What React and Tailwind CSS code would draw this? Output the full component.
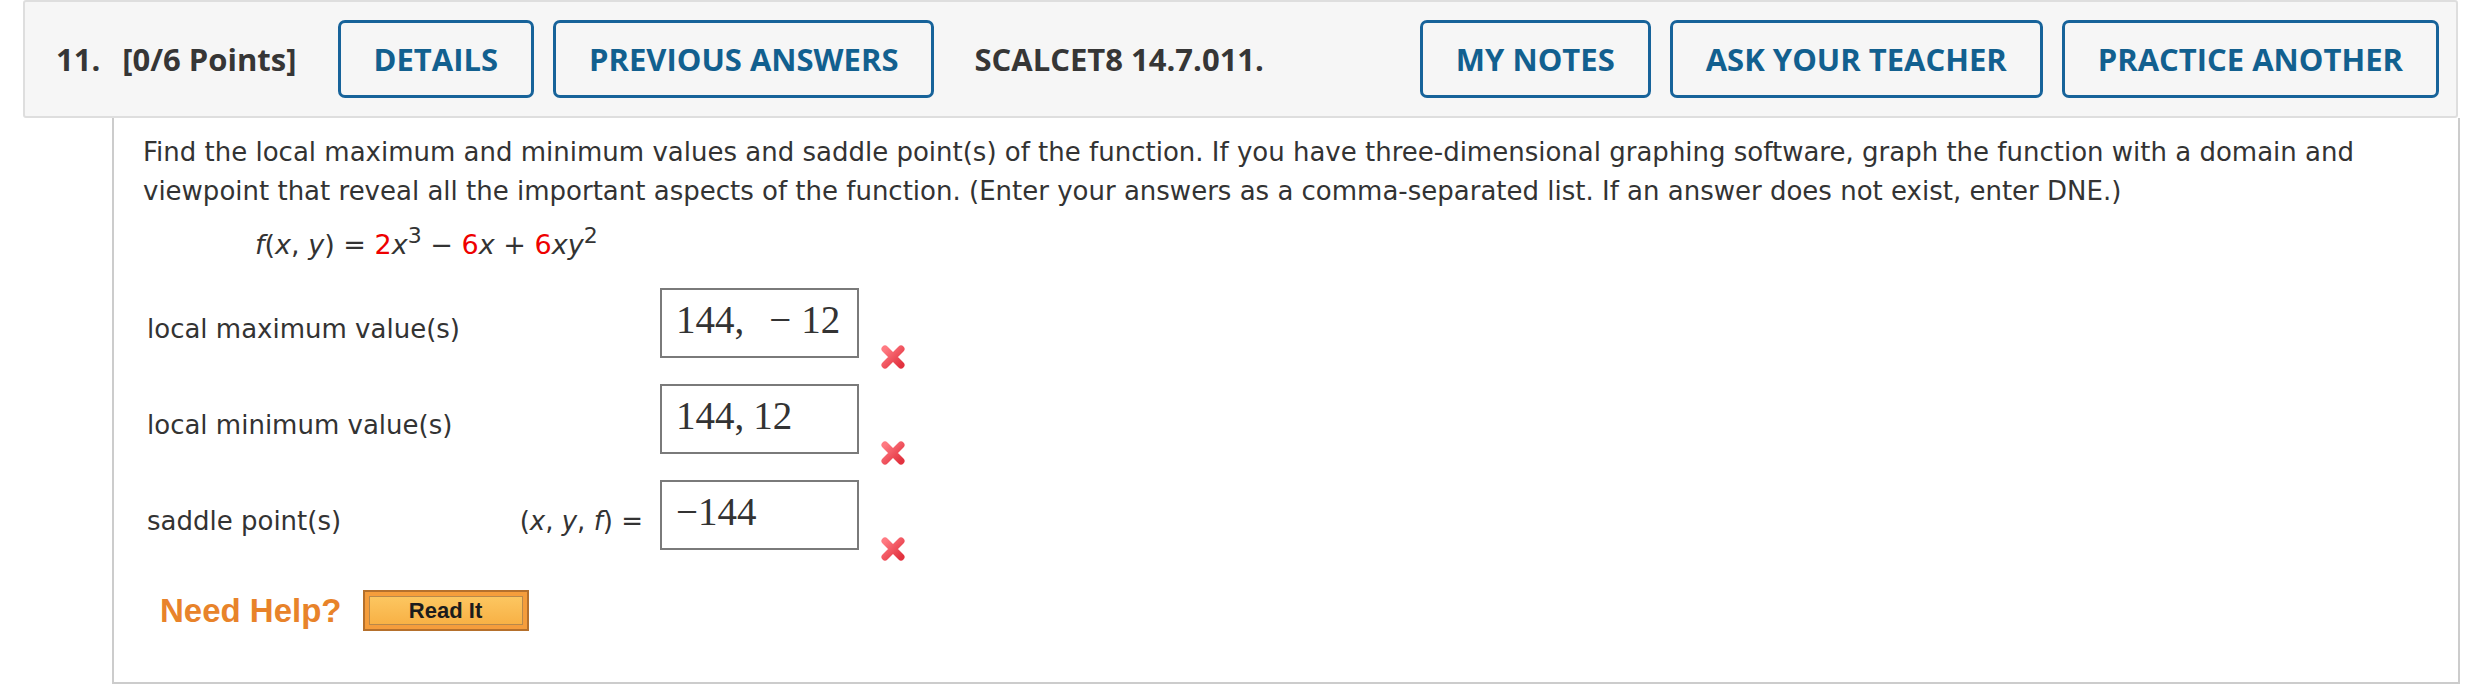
import React from "react";

const headerButtons = ["MY NOTES", "ASK YOUR TEACHER", "PRACTICE ANOTHER"];

function HeaderButton({ children }) {
  return (
    <button className="h-[78px] px-[33px] border-[3px] border-[#17639a] rounded-[7px] text-[#12608f] text-[31px] font-bold bg-transparent">
      {children}
    </button>
  );
}

function WrongMark() {
  return (
    <svg width="26" height="26" viewBox="0 0 26 26" className="mt-[56px] ml-[21px] shrink-0">
      <defs>
        <linearGradient id="xg" x1="0" y1="0" x2="1" y2="1">
          <stop offset="0" stopColor="#ff7a82" />
          <stop offset="1" stopColor="#e2323f" />
        </linearGradient>
      </defs>
      <path d="M5 5 L21 21 M21 5 L5 21" stroke="url(#xg)" strokeWidth="7" strokeLinecap="round" />
    </svg>
  );
}

function AnswerRow({ label, prefix, children }) {
  return (
    <div className="flex items-start h-[96px]">
      <div className="w-[517px] pl-[4px] pr-[17px] pt-[22px] flex justify-between leading-[39px]">
        <span>{label}</span>
        {prefix}
      </div>
      <div className="w-[199px] h-[70px] border-2 border-[#7a7a7a] pl-[14px] pt-[8px] font-['Liberation_Serif',serif] text-[39px] leading-[44px] text-[#333] flex">
        {children}
      </div>
      <WrongMark />
    </div>
  );
}

export default function App() {
  return (
    <div className="w-[2468px] h-[698px] bg-white font-['DejaVu_Sans',sans-serif] text-[#333]">
      <div className="pl-[23px] pr-[10px]">
        <div className="h-[118px] border-2 border-[#dedede] rounded-[3px] bg-[#f6f6f6] flex items-center pl-[31px] pr-[17px] font-['Open_Sans',sans-serif]">
          <span className="text-[31px] font-bold text-[#363636] mr-[22px]">11.</span>
          <span className="text-[31px] font-bold text-[#363636] mr-[41px]">[0/6 Points]</span>
          <div className="flex gap-[19px]">
            <HeaderButton>DETAILS</HeaderButton>
            <HeaderButton>PREVIOUS ANSWERS</HeaderButton>
          </div>
          <span className="ml-[40px] text-[31px] font-bold text-[#363636]">SCALCET8 14.7.011.</span>
          <div className="ml-auto flex gap-[19px]">
            {headerButtons.map((b) => (
              <HeaderButton key={b}>{b}</HeaderButton>
            ))}
          </div>
        </div>
      </div>

      <div className="ml-[112px] w-[2348px] h-[566px] border-x-2 border-b-2 border-[#cccccc] pl-[29px] pr-[36px] pt-[15px] text-[26px]">
        <p className="leading-[39px]">
          Find the local maximum and minimum values and saddle point(s) of the function. If you have three-dimensional graphing software, graph the function with a domain and viewpoint that reveal all the important aspects of the function. (Enter your answers as a comma-separated list. If an answer does not exist, enter DNE.)
        </p>
        <p className="mt-[14px] ml-[112px] leading-[39px] text-[27px]">
          <i>f</i>(<i>x</i>, <i>y</i>) = <span className="text-[#ee0000]">2</span>
          <i>x</i>
          <sup className="text-[22px]">3</sup> − <span className="text-[#ee0000]">6</span>
          <i>x</i> + <span className="text-[#ee0000]">6</span>
          <i>xy</i>
          <sup className="text-[22px]">2</sup>
        </p>

        <div className="mt-[24px]">
          <AnswerRow label="local maximum value(s)">
            <span>144,</span>
            <span className="ml-[25px]">−</span>
            <span className="ml-[10px]">12</span>
          </AnswerRow>
          <AnswerRow label="local minimum value(s)">
            <span>144,</span>
            <span className="ml-[9px]">12</span>
          </AnswerRow>
          <AnswerRow
            label="saddle point(s)"
            prefix={
              <span>
                (<i>x</i>, <i>y</i>, <i>f</i>) =
              </span>
            }
          >
            <span>−144</span>
          </AnswerRow>
        </div>

        <div className="mt-[10px] ml-[17px] flex items-center gap-[21px]">
          <span className="font-['Liberation_Sans',sans-serif] font-bold text-[33px] text-[#e8832a]">Need Help?</span>
          <div className="w-[166px] h-[41px] border-2 border-[#b5702c] bg-[#f59d3c] p-[4px]">
            <div className="h-full border border-[#b8884a] bg-gradient-to-b from-[#fcc660] to-[#f8b145] flex items-center justify-center font-['Liberation_Sans',sans-serif] font-bold text-[22px] text-[#1c1c1c] leading-none">
              Read It
            </div>
          </div>
        </div>
      </div>
    </div>
  );
}
